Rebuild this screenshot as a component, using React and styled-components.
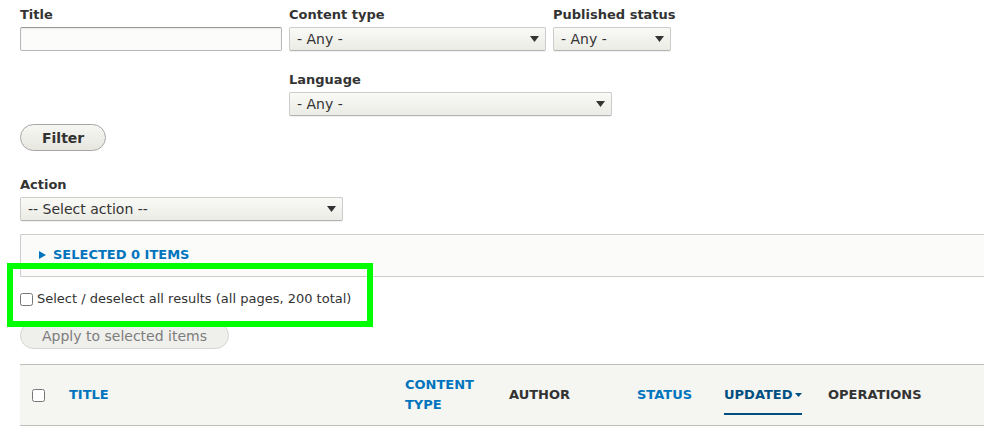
import React from 'react';
import styled, { createGlobalStyle } from 'styled-components';

const GlobalStyle = createGlobalStyle`
  html, body {
    margin: 0;
    padding: 0;
    background: #fff;
    overflow: hidden;
  }
  body {
    font-family: "DejaVu Sans", "Liberation Sans", sans-serif;
    color: #333;
    font-size: 13px;
  }
`;

const Page = styled.div`
  position: relative;
  width: 1010px;
  padding: 6px 0 0 20px;
`;

const Filters = styled.div`
  display: flex;
  gap: 7px;
`;

const Column = styled.div`
  display: flex;
  flex-direction: column;
  gap: ${({ $gap }) => $gap || 0}px;
  margin-top: ${({ $top }) => $top || 0}px;
`;

const Row = styled.div`
  display: flex;
  gap: 7px;
`;

const Field = styled.div`
  display: flex;
  flex-direction: column;
  width: ${({ $w }) => $w}px;
  margin-top: ${({ $top }) => $top || 0}px;
`;

const Label = styled.label`
  font-weight: bold;
  font-size: 13px;
  line-height: 18px;
  margin-bottom: 3px;
  color: #333;
  white-space: nowrap;
`;

const TextInput = styled.div`
  box-sizing: border-box;
  height: 24px;
  border: 1px solid #b8b8b8;
  border-top-color: #999;
  border-radius: 2px;
  background: #fcfcfa;
  box-shadow: inset 0 1px 2px rgba(0, 0, 0, 0.08);
`;

const SelectBox = styled.div`
  box-sizing: border-box;
  width: ${({ $w }) => $w}px;
  height: 24px;
  display: flex;
  align-items: center;
  justify-content: space-between;
  padding: 0 6px 0 7px;
  border: 1px solid #ccc;
  border-bottom-color: #b3b3b3;
  border-radius: 2px;
  background: linear-gradient(#f9f9f6, #ecece6);
  box-shadow: 0 1px 1px rgba(0, 0, 0, 0.06);
  font-size: 14px;
  color: #333;
  white-space: nowrap;
`;

const Arrow = () => (
  <svg width="9" height="6" viewBox="0 0 9 6">
    <path d="M0 0h9L4.5 6z" fill="#333" />
  </svg>
);

const Select = ({ w, children }) => (
  <SelectBox $w={w}>
    <span>{children}</span>
    <Arrow />
  </SelectBox>
);

const Button = styled.button`
  box-sizing: border-box;
  height: 27px;
  padding: 0 21px;
  border: 1px solid ${({ disabled }) => (disabled ? '#d4d4d0' : '#a6a6a6')};
  border-radius: 20em;
  background: ${({ disabled }) =>
    disabled ? '#efefec' : 'linear-gradient(#f6f6f3, #e7e7df)'};
  font-family: inherit;
  font-size: 14px;
  font-weight: ${({ $bold }) => ($bold ? 'bold' : 'normal')};
  color: ${({ disabled }) => (disabled ? '#7d7d7d' : '#333')};
  align-self: flex-start;
  cursor: pointer;
`;

const Details = styled.div`
  box-sizing: border-box;
  height: 43px;
  border: 1px solid #ccc;
  border-right: none;
  border-radius: 2px 0 0 2px;
  background: #fbfbf9;
  display: flex;
  align-items: center;
  padding: 0 18px 2px;
  color: #0074bd;
  font-weight: bold;
  font-size: 13px;
  text-transform: uppercase;
  gap: 7px;
`;

const CheckRow = styled.label`
  display: flex;
  align-items: center;
  gap: 4px;
  font-size: 13px;
  line-height: 18px;
  color: #333;

  input {
    margin: 0;
    width: 13px;
    height: 13px;
  }
`;

const Highlight = styled.div`
  position: absolute;
  left: 7px;
  top: 263px;
  width: 366px;
  height: 64px;
  box-sizing: border-box;
  border: 6px solid #00ff00;
  pointer-events: none;
`;

const TableHead = styled.div`
  display: grid;
  grid-template-columns: 37px 336px 104px 128px 87px 104px 1fr;
  align-items: center;
  border-top: 1px solid #bfbfba;
  border-bottom: 1px solid #bfbfba;
  background: #f5f5f2;
`;

const Th = styled.div`
  padding: 10px 0 10px 12px;
  font-size: 13px;
  line-height: 20px;
  font-weight: bold;
  text-transform: uppercase;
  color: ${({ $tone }) =>
    $tone === 'link' ? '#0074bd' : $tone === 'active' ? '#004f80' : '#333'};
  display: flex;
  align-items: center;

  input {
    margin: 0;
    width: 13px;
    height: 13px;
  }
`;

const ThText = styled.span`
  width: ${({ $w }) => ($w ? `${$w}px` : 'auto')};
`;

const Active = styled.span`
  position: relative;
  display: inline-flex;
  align-items: center;
  gap: 3px;

  &::after {
    content: '';
    position: absolute;
    left: 0;
    right: 0;
    bottom: -10px;
    height: 2px;
    background: #004f80;
  }
`;

export default function App() {
  return (
    <>
      <GlobalStyle />
      <Page>
        <Filters>
          <Field $w={262}>
            <Label>Title</Label>
            <TextInput />
          </Field>
          <Column $gap={20}>
            <Row>
              <Field $w={257}>
                <Label>Content type</Label>
                <Select w={257}>- Any -</Select>
              </Field>
              <Field $w={118}>
                <Label>Published status</Label>
                <Select w={118}>- Any -</Select>
              </Field>
            </Row>
            <Field $w={323}>
              <Label>Language</Label>
              <Select w={323}>- Any -</Select>
            </Field>
          </Column>
        </Filters>

        <Column $top={8}>
          <Button $bold>Filter</Button>
        </Column>

        <Field $w={323} $top={25}>
          <Label>Action</Label>
          <Select w={323}>-- Select action --</Select>
        </Field>

        <Column $top={13}>
          <Details>
            <svg width="7" height="8" viewBox="0 0 7 8">
              <path d="M0 0l7 4-7 4z" fill="#0074bd" />
            </svg>
            Selected 0 items
          </Details>
        </Column>

        <Column $top={13}>
          <CheckRow>
            <input type="checkbox" />
            Select / deselect all results (all pages, 200 total)
          </CheckRow>
        </Column>

        <Column $top={14}>
          <Button disabled>Apply to selected items</Button>
        </Column>

        <Column $top={15}>
          <TableHead>
            <Th>
              <input type="checkbox" />
            </Th>
            <Th $tone="link">Title</Th>
            <Th $tone="link">
              <ThText $w={80}>Content type</ThText>
            </Th>
            <Th>Author</Th>
            <Th $tone="link">Status</Th>
            <Th $tone="active">
              <Active>
                Updated
                <svg width="7" height="4" viewBox="0 0 7 4">
                  <path d="M0 0h7L3.5 4z" fill="#004f80" />
                </svg>
              </Active>
            </Th>
            <Th>Operations</Th>
          </TableHead>
        </Column>

        <Highlight />
      </Page>
    </>
  );
}
